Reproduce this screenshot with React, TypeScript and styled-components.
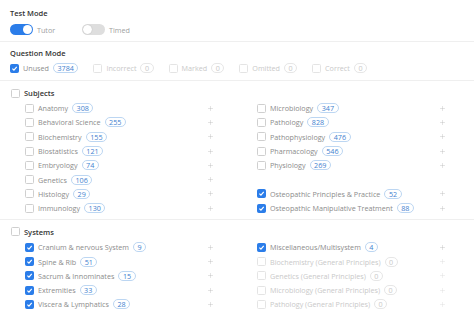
import React from "react";
import styled, { createGlobalStyle } from "styled-components";
import { Plus } from "lucide-react";

const GlobalStyle = createGlobalStyle`
  html, body {
    margin: 0;
    padding: 0;
    background: #fff;
  }

  body {
    font-family: "Open Sans", "Noto Sans", sans-serif;
  }
`;

const BLUE = "#2b7de9";

const Page = styled.div`
  width: 474px;
  height: 316px;
  overflow: hidden;
  background: #fff;
`;

const Section = styled.section<{ $top: number; $bottom: number; $last?: boolean }>`
  padding: ${(p) => p.$top}px 10px ${(p) => p.$bottom}px;
  border-bottom: ${(p) => (p.$last ? "none" : "1px solid #efefef")};
`;

const Title = styled.div`
  height: 10px;
  line-height: 10px;
  font-size: 7.5px;
  font-weight: 600;
  color: #333;
`;

const ToggleRow = styled.div`
  display: flex;
  align-items: center;
  height: 11px;
  margin-top: 6px;
`;

const ToggleItem = styled.label`
  display: flex;
  align-items: center;
  gap: 4px;
  width: 72px;
  font-size: 7.2px;
  color: #a0a0a0;
`;

const Switch = styled.span<{ $on?: boolean }>`
  position: relative;
  width: 23px;
  height: 11px;
  border-radius: 6px;
  background: ${(p) => (p.$on ? BLUE : "#dedede")};

  &::after {
    content: "";
    position: absolute;
    top: 1px;
    left: ${(p) => (p.$on ? "13px" : "1px")};
    width: 9px;
    height: 9px;
    border-radius: 50%;
    background: #fff;
    box-shadow: ${(p) => (p.$on ? "none" : "0 0 1px rgba(0,0,0,0.3)")};
  }
`;

const ModeRow = styled.div`
  display: flex;
  align-items: center;
  gap: 15px;
  height: 10px;
  margin-top: 5px;
`;

const Option = styled.div<{ $muted?: boolean }>`
  display: flex;
  align-items: center;
  gap: 4px;
  font-size: 7.2px;
  line-height: 10px;
  color: ${(p) => (p.$muted ? "#c9c9c9" : "#8c8c8c")};
`;

const Box = styled.span<{ $checked?: boolean; $muted?: boolean }>`
  display: flex;
  align-items: center;
  justify-content: center;
  flex: none;
  width: 9px;
  height: 9px;
  box-sizing: border-box;
  border-radius: 1.5px;
  border: 1px solid
    ${(p) => (p.$checked ? BLUE : p.$muted ? "#e4e4e4" : "#cfcfcf")};
  background: ${(p) => (p.$checked ? BLUE : "#fff")};
`;

const Badge = styled.span<{ $muted?: boolean }>`
  display: inline-flex;
  align-items: center;
  height: 10px;
  box-sizing: border-box;
  padding: 0 3.5px;
  border-radius: 6px;
  border: 1px solid ${(p) => (p.$muted ? "#e6e6e6" : "#bcd6f2")};
  font-size: 7.2px;
  color: ${(p) => (p.$muted ? "#c9c9c9" : "#3f82cf")};
`;

const GroupHeader = styled.div`
  display: flex;
  align-items: center;
  gap: 4px;
  height: 10px;
  margin-left: 1px;
  font-size: 7.5px;
  font-weight: 600;
  color: #333;
`;

const Columns = styled.div<{ $gapTop: number }>`
  display: grid;
  grid-template-columns: 191px 191px;
  column-gap: 41px;
  padding-left: 15px;
  margin-top: ${(p) => p.$gapTop}px;
`;

const Column = styled.div`
  display: flex;
  flex-direction: column;
`;

const Row = styled.div<{ $muted?: boolean }>`
  display: flex;
  align-items: center;
  gap: 4px;
  height: 14.3px;
  padding-right: 2.5px;
  font-size: 7.2px;
  line-height: 10px;
  color: ${(p) => (p.$muted ? "#c9c9c9" : "#8c8c8c")};
`;

const Spacer = styled.div`
  height: 14.3px;
`;

const AddIcon = styled(Plus)<{ $muted?: boolean }>`
  margin-left: auto;
  flex: none;
  color: ${(p) => (p.$muted ? "#d6d6d6" : "#b5b5b5")};
`;

const Check = () => (
  <svg width="7" height="7" viewBox="0 0 10 10">
    <path d="M2 5.2 L4.2 7.3 L8.2 2.8" fill="none" stroke="#fff" strokeWidth="1.7" />
  </svg>
);

type Item = { name: string; count: number; checked?: boolean; muted?: boolean } | null;

const CheckBox = ({ checked, muted }: { checked?: boolean; muted?: boolean }) => (
  <Box $checked={checked} $muted={muted}>
    {checked ? <Check /> : null}
  </Box>
);

const ItemRow = ({ item }: { item: Item }) => {
  if (!item) return <Spacer />;
  return (
    <Row $muted={item.muted}>
      <CheckBox checked={item.checked} muted={item.muted} />
      <span>{item.name}</span>
      <Badge $muted={item.muted}>{item.count}</Badge>
      <AddIcon size={7} strokeWidth={1.3} $muted={item.muted} />
    </Row>
  );
};

const modes = [
  { name: "Unused", count: 3784, checked: true },
  { name: "Incorrect", count: 0, muted: true },
  { name: "Marked", count: 0, muted: true },
  { name: "Omitted", count: 0, muted: true },
  { name: "Correct", count: 0, muted: true },
];

const subjectsLeft: Item[] = [
  { name: "Anatomy", count: 308 },
  { name: "Behavioral Science", count: 255 },
  { name: "Biochemistry", count: 155 },
  { name: "Biostatistics", count: 121 },
  { name: "Embryology", count: 74 },
  { name: "Genetics", count: 106 },
  { name: "Histology", count: 29 },
  { name: "Immunology", count: 130 },
];

const subjectsRight: Item[] = [
  { name: "Microbiology", count: 347 },
  { name: "Pathology", count: 828 },
  { name: "Pathophysiology", count: 476 },
  { name: "Pharmacology", count: 546 },
  { name: "Physiology", count: 269 },
  null,
  { name: "Osteopathic Principles & Practice", count: 52, checked: true },
  { name: "Osteopathic Manipulative Treatment", count: 88, checked: true },
];

const systemsLeft: Item[] = [
  { name: "Cranium & nervous System", count: 9, checked: true },
  { name: "Spine & Rib", count: 51, checked: true },
  { name: "Sacrum & Innominates", count: 15, checked: true },
  { name: "Extremities", count: 33, checked: true },
  { name: "Viscera & Lymphatics", count: 28, checked: true },
];

const systemsRight: Item[] = [
  { name: "Miscellaneous/Multisystem", count: 4, checked: true },
  { name: "Biochemistry (General Principles)", count: 0, muted: true },
  { name: "Genetics (General Principles)", count: 0, muted: true },
  { name: "Microbiology (General Principles)", count: 0, muted: true },
  { name: "Pathology (General Principles)", count: 0, muted: true },
];

const App = () => {
  return (
    <Page>
      <GlobalStyle />

      <Section $top={8} $bottom={6}>
        <Title>Test Mode</Title>
        <ToggleRow>
          <ToggleItem>
            <Switch $on />
            Tutor
          </ToggleItem>
          <ToggleItem>
            <Switch />
            Timed
          </ToggleItem>
        </ToggleRow>
      </Section>

      <Section $top={6} $bottom={7}>
        <Title>Question Mode</Title>
        <ModeRow>
          {modes.map((m) => (
            <Option key={m.name} $muted={m.muted}>
              <CheckBox checked={m.checked} muted={m.muted} />
              {m.name}
              <Badge $muted={m.muted}>{m.count}</Badge>
            </Option>
          ))}
        </ModeRow>
      </Section>

      <Section $top={7} $bottom={3.6}>
        <GroupHeader>
          <CheckBox />
          Subjects
        </GroupHeader>
        <Columns $gapTop={3}>
          <Column>
            {subjectsLeft.map((it, i) => (
              <ItemRow key={i} item={it} />
            ))}
          </Column>
          <Column>
            {subjectsRight.map((it, i) => (
              <ItemRow key={i} item={it} />
            ))}
          </Column>
        </Columns>
      </Section>

      <Section $top={7} $bottom={0} $last>
        <GroupHeader>
          <CheckBox />
          Systems
        </GroupHeader>
        <Columns $gapTop={3.2}>
          <Column>
            {systemsLeft.map((it, i) => (
              <ItemRow key={i} item={it} />
            ))}
          </Column>
          <Column>
            {systemsRight.map((it, i) => (
              <ItemRow key={i} item={it} />
            ))}
          </Column>
        </Columns>
      </Section>
    </Page>
  );
};

export default App;
